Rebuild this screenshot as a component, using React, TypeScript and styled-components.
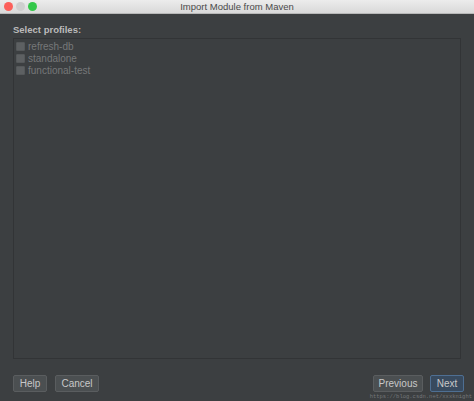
import React from "react";
import styled, { createGlobalStyle } from "styled-components";

const Global = createGlobalStyle`
  html, body { margin: 0; padding: 0; background: #3c3f41; }
  body { font-family: "Liberation Sans", Arial, sans-serif; }
  * { box-sizing: border-box; }
`;

const Window = styled.div`
  width: 474px;
  height: 401px;
  display: flex;
  flex-direction: column;
  background: #3c3f41;
  position: relative;
  overflow: hidden;
`;

const TitleBar = styled.div`
  height: 14px;
  flex: none;
  background: linear-gradient(#ececec, #d9d9d9);
  border-bottom: 1px solid #b8b8b8;
  display: flex;
  align-items: center;
  position: relative;
  padding-left: 4px;
  gap: 3px;
`;

const Light = styled.span<{ $c: string }>`
  width: 9px;
  height: 9px;
  border-radius: 50%;
  background: ${(p) => p.$c};
  display: inline-block;
`;

const Title = styled.div`
  position: absolute;
  left: 0;
  right: 0;
  top: 0;
  height: 13px;
  line-height: 13px;
  text-align: center;
  font-size: 9.5px;
  color: #4a4a4a;
  font-family: "Liberation Sans", Arial, sans-serif;
`;

const Body = styled.div`
  flex: 1;
  display: flex;
  flex-direction: column;
  padding: 9px 10px 10px 13px;
`;

const Label = styled.div`
  font-size: 9.5px;
  font-weight: bold;
  color: #bbbbbb;
  height: 14px;
  line-height: 14px;
  margin-bottom: 1px;
`;

const List = styled.div`
  height: 321px;
  width: 448px;
  border: 1px solid #323436;
  background: #3c3f41;
  padding: 1px 0 0 2px;
  display: flex;
  flex-direction: column;
`;

const Row = styled.label`
  display: flex;
  align-items: center;
  height: 12px;
  gap: 3px;
  font-size: 10px;
  color: #767879;
`;

const Box = styled.span`
  width: 9px;
  height: 9px;
  background: #5d6062;
  border: 1px solid #55585a;
  border-radius: 1px;
  display: inline-block;
`;

const Footer = styled.div`
  display: flex;
  align-items: center;
  margin-top: 16px;
`;

const Group = styled.div<{ $gap: number }>`
  display: flex;
  align-items: center;
  gap: ${(p) => p.$gap}px;
`;

const Spacer = styled.div`
  flex: 1;
`;

const Button = styled.button<{ $primary?: boolean; $w: number }>`
  width: ${(p) => p.$w}px;
  height: 17px;
  padding: 0;
  font-family: "Liberation Sans", Arial, sans-serif;
  font-size: 10px;
  color: #c8c8c8;
  background: ${(p) => (p.$primary ? "#384a5e" : "#4b4f51")};
  border: 1px solid ${(p) => (p.$primary ? "#4e6f93" : "#5a5d5f")};
  border-radius: 2px;
`;

const Watermark = styled.div`
  position: absolute;
  right: 2px;
  bottom: 1px;
  font-family: "Liberation Mono", monospace;
  font-size: 5.5px;
  color: #74777a;
`;

export default function App() {
  const profiles = ["refresh-db", "standalone", "functional-test"];
  return (
    <>
      <Global />
      <Window>
        <TitleBar>
          <Light $c="#fc605b" />
          <Light $c="#cfcfcf" />
          <Light $c="#34c84a" />
          <Title>Import Module from Maven</Title>
        </TitleBar>
        <Body>
          <Label>Select profiles:</Label>
          <List>
            {profiles.map((p) => (
              <Row key={p}>
                <Box />
                {p}
              </Row>
            ))}
          </List>
          <Footer>
            <Group $gap={8}>
              <Button $w={34}>Help</Button>
              <Button $w={44}>Cancel</Button>
            </Group>
            <Spacer />
            <Group $gap={7}>
              <Button $w={50}>Previous</Button>
              <Button $w={34} $primary>
                Next
              </Button>
            </Group>
          </Footer>
        </Body>
        <Watermark>https://blog.csdn.net/xxxknight</Watermark>
      </Window>
    </>
  );
}
